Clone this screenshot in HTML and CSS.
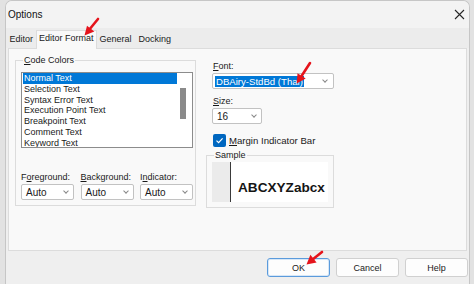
FILE: index.html
```html
<!DOCTYPE html>
<html lang="en">
<head>
    <meta charset="UTF-8">
    <meta name="viewport" content="width=device-width, initial-scale=1.0">
    <title>Options</title>
    <link rel="stylesheet" href="styles.css">
</head>
<body>
    <div class="window">
        <div class="titlebar">
            <span class="title">Options</span>
            <svg class="close" width="11" height="11" viewBox="0 0 11 11">
                <path d="M1 1 L10 10 M10 1 L1 10" stroke="#262626" stroke-width="1.1" fill="none"/>
            </svg>
        </div>

        <div class="tabs">
            <span class="tab">Editor</span>
            <span class="tab active">Editor Format</span>
            <span class="tab">General</span>
            <span class="tab">Docking</span>
        </div>

        <div class="page">
            <fieldset class="group colors">
                <legend><u>C</u>ode Colors</legend>
                <div class="listbox">
                    <ul class="items">
                        <li class="selected">Normal Text</li>
                        <li>Selection Text</li>
                        <li>Syntax Error Text</li>
                        <li>Execution Point Text</li>
                        <li>Breakpoint Text</li>
                        <li>Comment Text</li>
                        <li>Keyword Text</li>
                    </ul>
                    <div class="scrollbar"><div class="thumb"></div></div>
                </div>

                <div class="pickers">
                    <div class="picker">
                        <span class="label">F<u>o</u>reground:</span>
                        <div class="combo"><span>Auto</span><i class="chev"></i></div>
                    </div>
                    <div class="picker">
                        <span class="label"><u>B</u>ackground:</span>
                        <div class="combo"><span>Auto</span><i class="chev"></i></div>
                    </div>
                    <div class="picker">
                        <span class="label">I<u>n</u>dicator:</span>
                        <div class="combo"><span>Auto</span><i class="chev"></i></div>
                    </div>
                </div>
            </fieldset>

            <div class="right">
                <span class="label font-label"><u>F</u>ont:</span>
                <div class="combo font-combo"><span class="sel">DBAiry-StdBd (Thai)</span><i class="chev"></i></div>

                <span class="label size-label"><u>S</u>ize:</span>
                <div class="combo size-combo"><span>16</span><i class="chev"></i></div>

                <div class="check">
                    <span class="box">
                        <svg width="9" height="9" viewBox="0 0 9 9"><path d="M1.5 4.6 L3.6 6.7 L7.6 2.3" stroke="#fff" stroke-width="1.2" fill="none"/></svg>
                    </span>
                    <span><u>M</u>argin Indicator Bar</span>
                </div>

                <fieldset class="group sample">
                    <legend>Sample</legend>
                    <div class="preview">
                        <div class="gutter"></div>
                        <div class="sample-text">ABCXYZabcx</div>
                    </div>
                </fieldset>
            </div>
        </div>

        <div class="buttons">
            <button class="btn default">OK</button>
            <button class="btn">Cancel</button>
            <button class="btn">Help</button>
        </div>
    </div>

    <!-- red annotation arrows -->
    <svg class="arrow arrow-tab" width="20" height="22" viewBox="0 0 20 22">
        <path d="M16 3 L8 12.8" stroke="#e5141c" stroke-width="2.6" stroke-linecap="round"/>
        <polygon points="2.5,19.5 12.3,15.6 5,9.7" fill="#e5141c"/>
    </svg>
    <svg class="arrow arrow-font" width="20" height="26" viewBox="0 0 20 26">
        <path d="M16 3 L7.4 16.3" stroke="#e5141c" stroke-width="2.6" stroke-linecap="round"/>
        <polygon points="2.7,23.5 11.7,18.6 3.5,13.3" fill="#e5141c"/>
    </svg>
    <svg class="arrow arrow-ok" width="21" height="18" viewBox="0 0 21 18">
        <path d="M18 3 L9.2 10" stroke="#e5141c" stroke-width="2.6" stroke-linecap="round"/>
        <polygon points="2.5,15.4 12.6,13.6 6.4,5.8" fill="#e5141c"/>
    </svg>
</body>
</html>
```

FILE: styles.css
```css
body {
    margin: 0;
    padding: 0;
    background-color: #e2e2e2;
    font-family: 'Liberation Sans', Arial, sans-serif;
    font-size: 9px;
    color: #1a1a1a;
    position: relative;
    width: 474px;
    height: 284px;
    overflow: hidden;
}
u {
    text-decoration-thickness: 1px;
    text-underline-offset: 1px;
}
.window {
    box-sizing: border-box;
    width: 465px;
    height: 284px;
    margin-left: 5px;
    border: 1px solid #c6c6c6;
    border-bottom: none;
    border-radius: 7px 7px 0 0;
    background-color: #efefef;
    display: flex;
    flex-direction: column;
    overflow: hidden;
}
.titlebar {
    height: 26px;
    flex: none;
    background-color: #f3f3f3;
    display: flex;
    align-items: center;
    justify-content: space-between;
    padding: 0 4px 1px 2px;
}
.title {
    font-size: 10px;
    color: #111;
}
.close {
    display: block;
    margin-top: 1px;
}
.tabs {
    height: 20px;
    flex: none;
    background-color: #ececec;
    display: flex;
    align-items: flex-end;
    position: relative;
    z-index: 1;
}
.tab {
    padding: 0 3.5px;
    height: 17px;
    line-height: 16px;
    color: #1a1a1a;
}
.tab.active {
    height: 18px;
    line-height: 15px;
    background-color: #f9f9f9;
    border: 1px solid #dcdcdc;
    border-bottom: none;
    margin: 0 -1px -1px;
    padding: 0 2.5px;
    position: relative;
}
.page {
    box-sizing: border-box;
    height: 203px;
    flex: none;
    margin: 0 2px;
    background-color: #f9f9f9;
    border: 1px solid #dcdcdc;
    display: flex;
    align-items: flex-start;
    padding: 6px 0 0 6px;
}
.group {
    margin: 0;
    border: 1px solid #dcdcdc;
    box-sizing: border-box;
}
.group legend {
    padding: 0 1px;
    margin-left: 2px;
    line-height: 11px;
    color: #1a1a1a;
}
.colors {
    width: 181px;
    padding: 6px 1px 5px 5px;
}
.listbox {
    box-sizing: border-box;
    height: 76px;
    width: 172px;
    border: 1px solid #8c8c8c;
    background-color: #fff;
    display: flex;
    overflow: hidden;
}
.items {
    list-style: none;
    margin: 0;
    padding: 0 0 0 1px;
    flex: 1;
}
.items li {
    line-height: 10.8px;
    height: 10.8px;
    padding-left: 1px;
    white-space: nowrap;
}
.items li.selected {
    background-color: #0078d7;
    color: #fff;
}
.scrollbar {
    width: 15px;
    flex: none;
    position: relative;
}
.thumb {
    position: absolute;
    left: 3px;
    top: 15px;
    width: 6px;
    height: 31px;
    background-color: #8a8a8a;
}
.pickers {
    display: flex;
    gap: 6.5px;
    margin-top: 24px;
}
.picker {
    display: flex;
    flex-direction: column;
    width: 53px;
}
.label {
    display: block;
    line-height: 11px;
    height: 11px;
}
.combo {
    box-sizing: border-box;
    height: 16px;
    margin-top: 1px;
    background-color: #fff;
    border: 1px solid #c2c2c2;
    border-radius: 2px;
    display: flex;
    align-items: center;
    justify-content: space-between;
    padding: 0 5px 0 4px;
    font-size: 10px;
}
.chev {
    display: block;
    width: 3px;
    height: 3px;
    border-right: 1px solid #888;
    border-bottom: 1px solid #888;
    transform: rotate(45deg);
    margin-top: -3px;
}
.right {
    display: flex;
    flex-direction: column;
    align-items: flex-start;
    margin-left: 10px;
    padding-top: 6px;
}
.font-label {
    margin-left: 7px;
}
.font-combo {
    width: 122px;
    margin-left: 6px;
    padding-left: 2px;
    padding-right: 6px;
}
.font-combo .sel {
    background-color: #0078d7;
    color: #fff;
    padding: 0 1px;
    line-height: 11px;
    font-size: 9.6px;
}
.size-label {
    margin-left: 7px;
    margin-top: 7px;
}
.size-combo {
    width: 50px;
    margin-left: 6px;
}
.check {
    display: flex;
    align-items: center;
    gap: 3px;
    margin: 10px 0 0 7px;
    font-size: 9.6px;
}
.box {
    box-sizing: border-box;
    width: 13px;
    height: 13px;
    border-radius: 2px;
    background-color: #0067c0;
    display: flex;
    align-items: center;
    justify-content: center;
}
.box svg {
    display: block;
}
.sample {
    width: 127px;
    margin-top: 3px;
    padding: 1px 5px 5px 5px;
}
.preview {
    height: 40px;
    width: 116px;
    background-color: #fff;
    display: flex;
}
.gutter {
    width: 18px;
    background-color: #ebebeb;
    border-right: 1px solid #3a3a3a;
}
.sample-text {
    font-weight: bold;
    font-size: 13.6px;
    color: #151515;
    padding: 19px 0 0 7px;
    line-height: 14px;
    letter-spacing: 0;
}
.buttons {
    flex: 1;
    display: flex;
    justify-content: flex-end;
    gap: 6px;
    padding: 7px 1px 0 0;
    background-color: #efefef;
}
.btn {
    box-sizing: border-box;
    width: 63px;
    height: 19px;
    background-color: #fdfdfd;
    border: 1px solid #d0d0d0;
    border-radius: 3px;
    font-family: 'Liberation Sans', Arial, sans-serif;
    font-size: 9px;
    color: #1a1a1a;
    padding: 0;
}
.btn.default {
    border-color: #5b9bdc;
    box-shadow: inset 0 0 0 1px #d7e7f7;
}
.arrow {
    position: absolute;
    z-index: 5;
}
.arrow-tab {
    left: 82px;
    top: 16px;
}
.arrow-font {
    left: 294px;
    top: 60px;
}
.arrow-ok {
    left: 304px;
    top: 249px;
}
```
